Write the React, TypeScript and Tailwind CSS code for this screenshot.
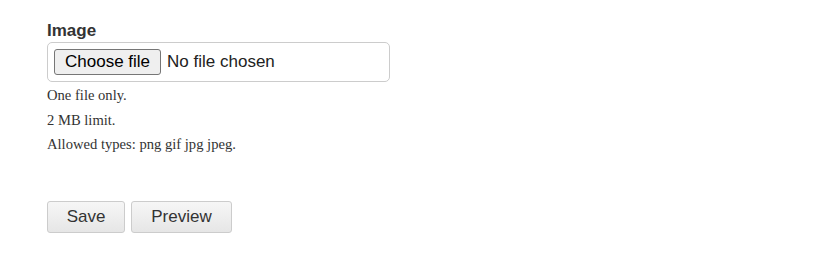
export default function App() {
  return (
    <div className="min-h-[266px] w-[832px] bg-white pl-[47px] pt-[20px] text-[#333] font-['Liberation_Sans',Arial,sans-serif]">
      <label className="block text-[17px] font-bold leading-[22px]">Image</label>
      <div className="flex h-[40px] w-[343px] items-center rounded-[5px] border border-[#ccc] pl-[6px]">
        <span className="flex h-[26px] items-center rounded-[3px] border border-[#767676] bg-[#efefef] px-[10px] text-[17px] text-black">
          Choose file
        </span>
        <span className="ml-[6px] text-[17px] text-[#222]">No file chosen</span>
      </div>
      <div className="mt-[1px] font-['Liberation_Serif',serif] text-[14.6px] leading-[24.5px] text-[#333]">
        <div>One file only.</div>
        <div>2 MB limit.</div>
        <div>Allowed types: png gif jpg jpeg.</div>
      </div>
      <div className="mt-[44px] flex gap-[6px]">
        <button className="h-[32px] w-[78px] rounded-[3px] border border-[#ccc] bg-gradient-to-b from-[#f6f6f6] to-[#e6e6e6] text-[17px] text-[#333]">
          Save
        </button>
        <button className="h-[32px] w-[101px] rounded-[3px] border border-[#ccc] bg-gradient-to-b from-[#f6f6f6] to-[#e6e6e6] text-[17px] text-[#333]">
          Preview
        </button>
      </div>
    </div>
  );
}
